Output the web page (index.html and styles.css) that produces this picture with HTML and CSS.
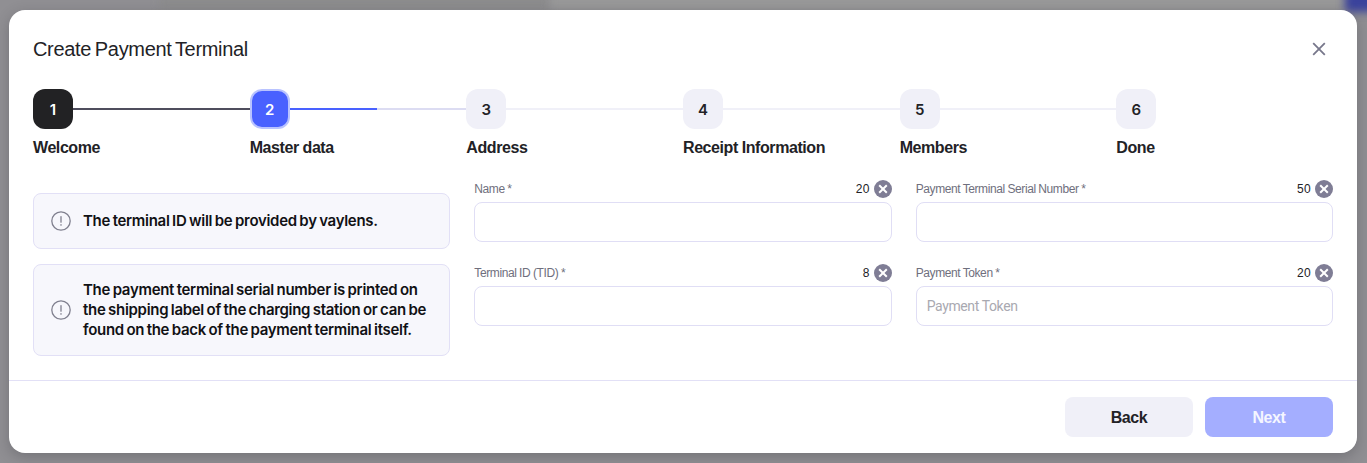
FILE: index.html
```html
<!DOCTYPE html>
<html lang="en">
<head>
<meta charset="utf-8">
<title>Create Payment Terminal</title>
<link rel="stylesheet" href="styles.css">
</head>
<body>
<div class="backdrop-blob blob-dark"></div>
<div class="backdrop-blob blob-grey"></div>
<div class="backdrop-blob blob-blue"></div>
<main class="modal">
  <header class="modal-head">
    <h1>Create Payment Terminal</h1>
    <button class="close" aria-label="Close">
      <svg width="14" height="14" viewBox="0 0 14 14"><path d="M1.2 1.2l11.6 11.6M12.8 1.2l-11.6 11.6"/></svg>
    </button>
  </header>
  <ol class="stepper">
    <li class="step done"><span class="bullet">1</span><span class="line"></span><span class="step-name">Welcome</span></li>
    <li class="step current"><span class="bullet">2</span><span class="line"><i></i></span><span class="step-name">Master data</span></li>
    <li class="step"><span class="bullet">3</span><span class="line"></span><span class="step-name">Address</span></li>
    <li class="step"><span class="bullet">4</span><span class="line"></span><span class="step-name">Receipt Information</span></li>
    <li class="step"><span class="bullet">5</span><span class="line"></span><span class="step-name">Members</span></li>
    <li class="step last"><span class="bullet">6</span><span class="step-name">Done</span></li>
  </ol>
  <section class="content">
    <div class="notes">
      <div class="note">
        <svg class="note-icon" width="20" height="20" viewBox="0 0 20 20"><circle cx="10" cy="10" r="9.2"/><path d="M10 5.6v5.6M10 13.6v.6"/></svg>
        <p>The terminal ID will be provided by vaylens.</p>
      </div>
      <div class="note">
        <svg class="note-icon" width="20" height="20" viewBox="0 0 20 20"><circle cx="10" cy="10" r="9.2"/><path d="M10 5.6v5.6M10 13.6v.6"/></svg>
        <p>The payment terminal serial number is printed on the shipping label of the charging station or can be found on the back of the payment terminal itself.</p>
      </div>
    </div>
    <div class="fields">
      <div class="field">
        <div class="field-top"><label>Name *</label><span class="count">20</span><span class="clear"><svg width="18" height="18" viewBox="0 0 18 18"><path d="M5.2 5.2l7.6 7.6M12.8 5.2l-7.6 7.6"/></svg></span></div>
        <input type="text">
      </div>
      <div class="field">
        <div class="field-top"><label>Payment Terminal Serial Number *</label><span class="count">50</span><span class="clear"><svg width="18" height="18" viewBox="0 0 18 18"><path d="M5.2 5.2l7.6 7.6M12.8 5.2l-7.6 7.6"/></svg></span></div>
        <input type="text">
      </div>
      <div class="field">
        <div class="field-top"><label>Terminal ID (TID) *</label><span class="count">8</span><span class="clear"><svg width="18" height="18" viewBox="0 0 18 18"><path d="M5.2 5.2l7.6 7.6M12.8 5.2l-7.6 7.6"/></svg></span></div>
        <input type="text">
      </div>
      <div class="field">
        <div class="field-top"><label>Payment Token *</label><span class="count">20</span><span class="clear"><svg width="18" height="18" viewBox="0 0 18 18"><path d="M5.2 5.2l7.6 7.6M12.8 5.2l-7.6 7.6"/></svg></span></div>
        <input type="text" placeholder="Payment Token">
      </div>
    </div>
  </section>
  <footer class="modal-foot">
    <button class="btn btn-back">Back</button>
    <button class="btn btn-next">Next</button>
  </footer>
</main>
</body>
</html>
```
FILE: styles.css
```css
* { box-sizing: border-box; }
html, body { height: 100%; }
body {
  margin: 0;
  height: 463px;
  overflow: hidden;
  position: relative;
  background: #908f93;
  font-family: "Liberation Sans", Arial, sans-serif;
  color: #222226;
  padding: 10px 10px 10px 9px;
}
.backdrop-blob { position: absolute; filter: blur(4px); }
.blob-dark { left: 160px; width: 390px; top: -6px; height: 16px; background: #8c8c8d; }
.blob-grey { left: 550px; right: 20px; top: -6px; height: 16px; background: #999999; }
.blob-blue { right: -10px; top: -10px; width: 32px; height: 22px; background: #3a429c; }
.modal {
  position: relative;
  height: 443px;
  background: #fff;
  border-radius: 16px;
  box-shadow: 0 4px 14px rgba(30, 30, 40, .25);
  display: flex;
  flex-direction: column;
}
.modal-head {
  display: flex;
  justify-content: space-between;
  align-items: center;
  padding: 26px 31px 0 24px;
  height: 79px;
  padding-bottom: 28px;
}
h1 {
  margin: 0;
  font-size: 20px;
  font-weight: 400;
  letter-spacing: -0.32px;
  word-spacing: -1.5px;
  line-height: 24px;
}
.close { border: 0; background: none; padding: 0; width: 14px; height: 14px; display: block; }
.close svg { display: block; fill: none; stroke: #77778b; stroke-width: 1.8; }
.stepper {
  list-style: none;
  margin: 0;
  padding: 0 24px;
  display: grid;
  grid-template-columns: repeat(6, 1fr);
}
.step {
  display: grid;
  grid-template-columns: 40px 1fr;
  grid-template-rows: 40px auto;
  align-items: center;
}
.bullet {
  width: 40px;
  height: 40px;
  border-radius: 12px;
  background: #f0f0f8;
  display: flex;
  align-items: center;
  justify-content: center;
  font-family: Inter, sans-serif;
  font-size: 15px;
  font-weight: 600;
  color: #222226;
}
.done .bullet { background: #222224; color: #fff; }
.current .bullet { background: #4961ff; color: #fff; border: 2px solid #b9c3ff; }
.line { height: 2px; background: #f0f0f8; display: block; }
.done .line { background: #4f4d5d; }
.current .line { background: #dcdcf2; }
.current .line i { display: block; height: 2px; width: 87px; background: #4961ff; }
.step-name {
  grid-column: 1 / -1;
  margin-top: 9px;
  font-size: 16px;
  line-height: 20px;
  font-weight: 700;
  letter-spacing: -0.42px;
  word-spacing: -0.2px;
  white-space: nowrap;
}
.content {
  margin-top: 22px;
  padding: 0 24px;
  display: grid;
  grid-template-columns: repeat(3, 1fr);
  column-gap: 24px;
}
.notes { display: flex; flex-direction: column; gap: 15px; padding-top: 13px; }
.note {
  display: flex;
  align-items: center;
  gap: 12px;
  min-height: 56px;
  padding: 15px 17px;
  background: #f7f7fc;
  border: 1px solid #e2e0f6;
  border-radius: 8px;
}
.note-icon { flex: none; fill: none; stroke: #80808f; stroke-width: 1.3; stroke-linecap: round; }
.note p {
  margin: 0;
  font-family: Inter, sans-serif;
  font-size: 15px;
  line-height: 20px;
  font-weight: 600;
  letter-spacing: -0.3px;
  word-spacing: -0.9px;
  color: #111114;
}
.fields {
  grid-column: span 2;
  display: grid;
  grid-template-columns: 1fr 1fr;
  align-content: start;
  column-gap: 24px;
  row-gap: 22px;
}
.field-top {
  display: flex;
  align-items: center;
  height: 18px;
  margin-bottom: 4px;
}
.field-top label {
  flex: 1;
  font-size: 12px;
  color: #6f6f7d;
  letter-spacing: -0.4px;
  word-spacing: -0.3px;
}
.count { font-size: 12px; letter-spacing: 0.3px; color: #222226; margin-right: 4px; }
.clear { width: 18px; height: 18px; border-radius: 50%; background: #7f7d95; display: block; }
.clear svg { display: block; fill: none; stroke: #fff; stroke-width: 2; }
input {
  display: block;
  width: 100%;
  height: 40px;
  border: 1px solid #e0def5;
  border-radius: 8px;
  background: #fff;
  padding: 0 10px;
  font: 400 14px Roboto, sans-serif;
  letter-spacing: -0.38px;
  outline: none;
}
input::placeholder { color: #a9a9b1; opacity: 1; }
.modal-foot {
  margin-top: auto;
  height: 73px;
  border-top: 1px solid #e2e0f6;
  border-radius: 0 0 16px 16px;
  padding: 16px 24px 0;
  display: flex;
  justify-content: flex-end;
  gap: 12px;
}
.btn {
  width: 128px;
  height: 40px;
  border: 0;
  padding: 1px 0 0;
  border-radius: 8px;
  font: 700 16px "Liberation Sans", Arial, sans-serif;
  letter-spacing: -0.4px;
}
.btn-back { background: #f0f0f8; color: #222226; }
.btn-next { background: #a4aeff; color: #f5f6ff; }
```
